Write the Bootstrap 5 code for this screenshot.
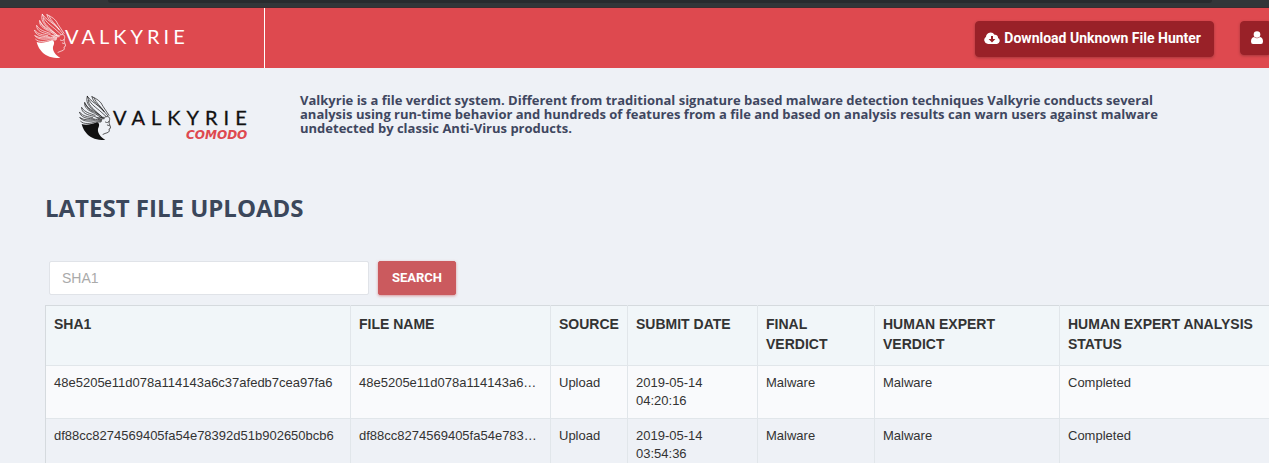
<!DOCTYPE html>
<html lang="en">
<head>
<meta charset="utf-8">
<meta name="viewport" content="width=device-width, initial-scale=1">
<title>Valkyrie</title>
<link href="https://cdn.jsdelivr.net/npm/bootstrap@5.3.0/dist/css/bootstrap.min.css" rel="stylesheet">
<style>
  body { background: #eef1f6; color: #333; font-family: "Liberation Sans", sans-serif; font-size: 13px; }
  .top-strip { height: 8px; background: #323639; border-bottom: 1px solid #3b2c30; }
  .top-tab { height: 3px; margin-left: 108px; width: 87%; background: #282b2e; border-radius: 0 0 4px 4px; }
  .site-header { height: 60px; background: #de494f; }
  .brand-cell { width: 265px; padding-left: 34px; border-right: 1px solid #fff; }
  .header-actions { padding-top: 13px; gap: 26px; }
  .btn-dark-red { --bs-btn-color: #fff; --bs-btn-bg: #992128; --bs-btn-border-color: #992128; --bs-btn-hover-color: #fff; --bs-btn-hover-bg: #84191f;
    height: 36px; padding: 0 12px 2px 8px; border-radius: 4px; font-family: Roboto, sans-serif; font-size: 14px; font-weight: 700; line-height: 20px; box-shadow: 0 1px 3px rgba(0,0,0,.25); }
  .user-btn { width: 29px; height: 34px; padding: 0 0 2px 4px; }
  .hero { padding: 25px 80px 0 77px; }
  .hero-text { width: 870px; margin-left: 43px; font: 700 13px/14px "Open Sans", sans-serif; color: #3f4760; }
  .uploads { padding-left: 45px; }
  .uploads-title { margin: 47px 0 37px; font: 700 24px/32px "Open Sans", sans-serif; color: #3b475b; }
  .sha-form { gap: 9px; }
  .sha-input { width: 320px; height: 34px; border: 1px solid #e0e3e8; border-radius: 2px; font: 14px/20px "Liberation Sans", sans-serif; }
  .sha-input::placeholder { color: #aaa; }
  .btn-search { --bs-btn-color: #fff; --bs-btn-bg: #cb5a5e; --bs-btn-border-color: #cb5a5e; --bs-btn-hover-color: #fff; --bs-btn-hover-bg: #b94d51;
    width: 78px; height: 34px; border-radius: 2px; font-family: Roboto, sans-serif; font-size: 13px; font-weight: 700; box-shadow: 0 1px 3px rgba(203,90,94,.6); }
  .uploads-table { table-layout: fixed; margin-top: 10px; border-color: #e1e6ea; border-left: 1px solid #d5dade; border-top: 1px solid #d5dade; }
  .uploads-table th { padding: 8px 8px 11px; height: 60px; background: #f1f6f9; color: #333; font-size: 14px; font-weight: 700; line-height: 20px; vertical-align: top; }
  .uploads-table td { padding: 8px; line-height: 18px; color: #333; }
  .uploads-table tr > :last-child { border-right: 0; }
  .uploads-table tbody tr:nth-child(odd) td { background: #f9fafc; }
  .uploads-table tbody tr:nth-child(even) td { background: #eef1f6; }
  .c-sha { width: 305px; } .c-file { width: 200px; } .c-src { width: 77px; } .c-date { width: 130px; } .c-final { width: 117px; } .c-human { width: 185px; }
</style>
</head>
<body>
<svg width="0" height="0" class="position-absolute" aria-hidden="true">
  <symbol id="wing" viewBox="0 0 120 156">
    <g fill="none" stroke="currentColor" stroke-width="2" stroke-linejoin="round" stroke-linecap="round">
      <path d="M37 13C32 27 38 40 55 54L80 75M37 13C43 33 58 43 74 56L93 73M37 13C46 26 58 32 70 42L86 57M51 14C53 29 68 38 80 50L99 72M51 14C65 20 78 28 84 43L102 70M40 25C40 38 50 47 68 63L84 77M57 18C64 34 75 40 88 59"/>
      <path d="M29 32C26 47 41 56 59 64L82 79M29 32C36 48 53 55 70 68M31 36C34 46 42 52 52 58M20 47C19 63 37 69 58 73L80 83M20 47C30 62 45 64 60 70M14 61C17 76 34 80 53 80L80 86M14 61C25 74 39 74 53 77M14 76C22 89 41 89 61 86L79 88M16 78C29 85 43 84 58 83M17 88C27 98 45 95 61 90L77 90"/>
      <path d="M86 78C95 70 105 73 104 83C103 91 97 94 91 90M102 88C101 98 109 104 106 109L102 111L103 117C101 123 93 122 84 127M97 99L103 101M70 82L88 80M66 78L86 76"/>
    </g>
    <path fill="currentColor" d="M20 96C31 101 48 98 66 91C75 93 73 103 69 110C67 122 76 135 91 143C67 147 44 138 32 121C25 112 22 104 20 96Z"/>
  </symbol>
</svg>
<div class="vh-100 overflow-hidden">
  <div class="top-strip"><div class="top-tab"></div></div>
  <header class="site-header d-flex align-items-stretch">
    <a href="#" class="brand-cell d-flex align-items-center flex-shrink-0 text-white" aria-label="Valkyrie home">
      <svg width="160" height="52" viewBox="0 0 160 52">
        <use href="#wing" x="-4" y="-2" width="40" height="52"/>
        <text x="31" y="32" fill="#fff" font-family="Lato, sans-serif" font-size="20" letter-spacing="4">VALKYRIE</text>
      </svg>
    </a>
    <div class="header-actions d-flex flex-grow-1 justify-content-end align-items-start">
      <button type="button" class="btn btn-dark-red d-flex align-items-center">
        <svg class="me-1" width="16" height="13" viewBox="0 0 16 13"><path fill="#fff" d="M4 12A4 4 0 0 1 2 4.700A4.600 4.600 0 0 1 10.500 2.700A3 3 0 0 1 14 6A3.200 3.200 0 0 1 13 12Z"/><path fill="#992128" d="M7 4H9V7H11.400L8 10.600L4.600 7H7Z"/></svg>
        Download Unknown File Hunter
      </button>
      <button type="button" class="btn btn-dark-red user-btn d-flex align-items-center justify-content-center rounded-end-0" aria-label="Account">
        <svg width="12" height="13" viewBox="0 0 12 13" fill="#fff"><circle cx="6" cy="3.500" r="3.300"/><path d="M3 6C1 6.500 0 8 0 10.500Q0 13 2 13H10Q12 13 12 10.500C12 8 11 6.500 9 6Q6 8.500 3 6Z"/></svg>
      </button>
    </div>
  </header>
  <main>
    <section class="hero d-flex align-items-start">
      <svg class="flex-shrink-0" width="180" height="52" viewBox="0 0 180 52" role="img" aria-label="Valkyrie Comodo">
        <use href="#wing" x="-2" y="-1" width="40" height="52" color="#111"/>
        <text x="36" y="32" fill="#111" stroke="#111" stroke-width=".3" font-family="Lato, sans-serif" font-size="20" letter-spacing="6">VALKYRIE</text>
        <circle cx="64" cy="29" r="1" fill="#e0434c"/>
        <text x="109" y="46" fill="#de494f" font-family="DejaVu Sans, sans-serif" font-size="12" font-weight="700" font-style="italic">COMODO</text>
      </svg>
      <p class="hero-text mb-0">Valkyrie is a file verdict system. Different from traditional signature based malware detection techniques Valkyrie conducts several analysis using run-time behavior and hundreds of features from a file and based on analysis results can warn users against malware undetected by classic Anti-Virus products.</p>
    </section>
    <section class="uploads">
      <h1 class="uploads-title">LATEST FILE UPLOADS</h1>
      <form class="sha-form d-flex ps-1" onsubmit="return false">
        <input type="text" class="form-control sha-input" placeholder="SHA1" aria-label="SHA1">
        <button type="submit" class="btn btn-search p-0">SEARCH</button>
      </form>
      <table class="table table-bordered uploads-table mb-0">
        <colgroup><col class="c-sha"><col class="c-file"><col class="c-src"><col class="c-date"><col class="c-final"><col class="c-human"><col></colgroup>
        <thead><tr><th>SHA1</th><th>FILE NAME</th><th>SOURCE</th><th>SUBMIT DATE</th><th>FINAL VERDICT</th><th>HUMAN EXPERT VERDICT</th><th>HUMAN EXPERT ANALYSIS STATUS</th></tr></thead>
        <tbody>
          <tr><td>48e5205e11d078a114143a6c37afedb7cea97fa6</td><td>48e5205e11d078a114143a6…</td><td>Upload</td><td>2019-05-14<br>04:20:16</td><td>Malware</td><td>Malware</td><td>Completed</td></tr>
          <tr><td>df88cc8274569405fa54e78392d51b902650bcb6</td><td>df88cc8274569405fa54e783…</td><td>Upload</td><td>2019-05-14<br>03:54:36</td><td>Malware</td><td>Malware</td><td>Completed</td></tr>
        </tbody>
      </table>
    </section>
  </main>
</div>
<script src="https://cdn.jsdelivr.net/npm/bootstrap@5.3.0/dist/js/bootstrap.bundle.min.js"></script>
</body>
</html>
